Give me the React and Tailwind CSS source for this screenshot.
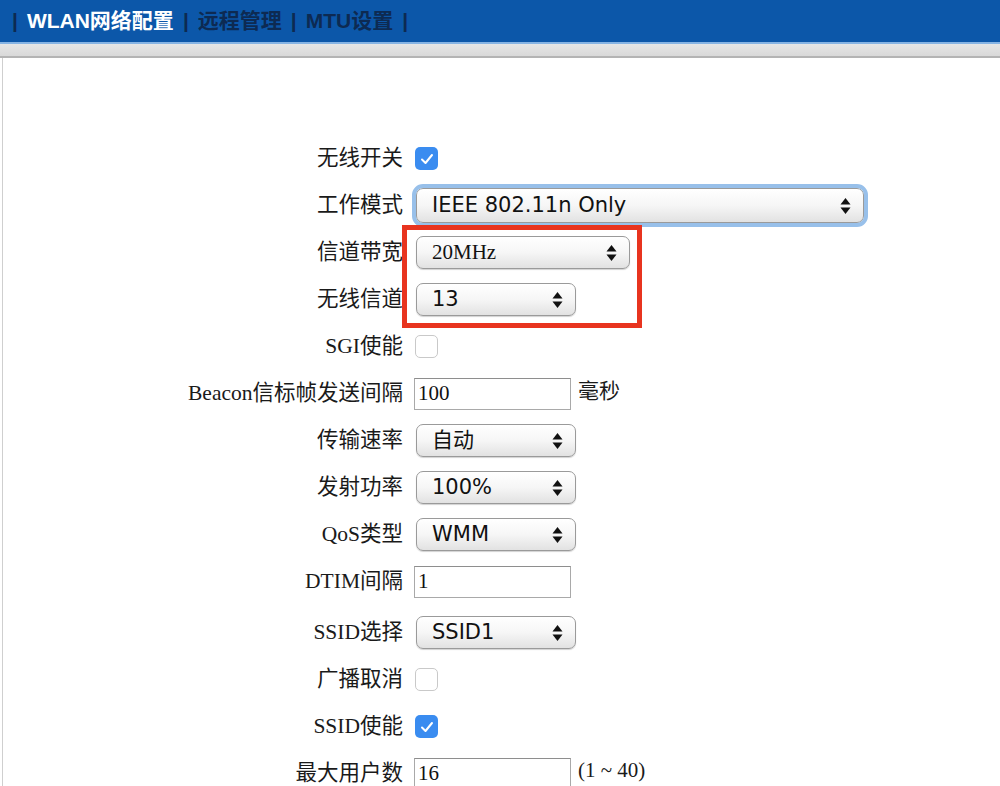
import React from 'react'

const serif = "font-['Liberation_Serif','Noto_Sans_CJK_SC',serif]"
const sans = "font-['DejaVu_Sans','Noto_Sans_CJK_SC',sans-serif]"

function Arrows() {
  return (
    <svg width="11" height="18" viewBox="0 0 11 18" aria-hidden>
      <path d="M5.5 1 L10.5 7.5 L0.5 7.5 Z" fill="#111" />
      <path d="M5.5 17 L10.5 10.5 L0.5 10.5 Z" fill="#111" />
    </svg>
  )
}

function Select({ value, size = 'w-[160px] h-[33px]', focus, serifText }) {
  return (
    <div
      className={
        'flex items-center justify-between rounded-[7px] border border-[#9a9a9a] bg-linear-to-b from-white via-[#f6f6f6] to-[#e2e2e2] pl-[15px] pr-[12px] shadow-[inset_0_1px_0_#fff,0_1px_1px_rgba(0,0,0,0.18)] ' +
        size +
        (focus ? ' outline-4 outline-[#98c0ea]' : '')
      }
    >
      <span className={(serifText ? serif : sans) + ' text-[21px] leading-none text-[#111]'}>{value}</span>
      <Arrows />
    </div>
  )
}

function Check({ on }) {
  if (on) {
    return (
      <div className="-ml-[1px] flex h-[23px] w-[23px] items-center justify-center rounded-[5px] bg-[#3a8cf0]">
        <svg width="14" height="12" viewBox="0 0 14 12" aria-hidden>
          <path d="M2 6.5 L5.5 10 L12 2" fill="none" stroke="#fff" strokeWidth="2" strokeLinecap="round" strokeLinejoin="round" />
        </svg>
      </div>
    )
  }
  return <div className="-ml-[1px] h-[23px] w-[23px] rounded-[5px] border border-[#c9c9c9] bg-white" />
}

function Input({ value }) {
  return (
    <div className="-ml-[2px] flex h-[32px] w-[157px] items-center border border-[#a9a9a9] border-t-[#8e8e8e] bg-white pl-[3px]">
      <span className={serif + ' text-[21px] leading-none text-[#111]'}>{value}</span>
    </div>
  )
}

function Row({ label, children, extra, className = '' }) {
  return (
    <div className={'flex h-[47px] items-center ' + className}>
      <div className={serif + ' w-[400px] text-right text-[21.5px] leading-none text-[#1a1a1a]'}>{label}</div>
      <div className="ml-[13px] flex items-center">
        {children}
        {extra}
      </div>
    </div>
  )
}

function Sep() {
  return <span className="mx-[9px]">|</span>
}

export default function App() {
  return (
    <div className="h-[786px] w-[1000px] overflow-hidden bg-white">
      <header className="flex h-[42px] items-center bg-[#0c57a9] pl-[3px] pb-[2px]">
        <div className={"font-['Liberation_Sans','Noto_Sans_CJK_SC',sans-serif] text-[21px] font-bold leading-none text-[#0d2a52] whitespace-nowrap"}>
          <Sep />
          <span className="text-white">WLAN网络配置</span>
          <Sep />
          远程管理
          <Sep />
          MTU设置
          <Sep />
        </div>
      </header>
      <div className="h-[2px] bg-[#86b4e4]" />
      <div className="h-[14px] border-b-2 border-[#b4b4b4] bg-linear-to-b from-[#e6e6e6] to-[#d9d9d9]" />

      <main className="relative ml-[2px] border-l border-[#cfcfcf] pt-[77px]">
        <Row label="无线开关">
          <Check on />
        </Row>
        <Row label="工作模式">
          <Select value="IEEE 802.11n Only" size="w-[448px] h-[35px]" focus />
        </Row>
        <Row label="信道带宽">
          <Select value="20MHz" size="w-[214px] h-[33px]" serifText />
        </Row>
        <Row label="无线信道">
          <Select value="13" />
        </Row>
        <Row label="SGI使能">
          <Check />
        </Row>
        <Row
          label="Beacon信标帧发送间隔"
          extra={<span className={sans + ' ml-[7px] -mt-[4px] text-[21px] leading-none text-[#1a1a1a]'}>毫秒</span>}
        >
          <Input value="100" />
        </Row>
        <Row label="传输速率">
          <Select value="自动" />
        </Row>
        <Row label="发射功率">
          <Select value="100%" />
        </Row>
        <Row label="QoS类型">
          <Select value="WMM" />
        </Row>
        <Row label="DTIM间隔">
          <Input value="1" />
        </Row>
        <Row label="SSID选择" className="mt-[4px]">
          <Select value="SSID1" />
        </Row>
        <Row label="广播取消">
          <Check />
        </Row>
        <Row label="SSID使能">
          <Check on />
        </Row>
        <Row
          label="最大用户数"
          extra={<span className={serif + ' ml-[7px] -mt-[6px] text-[21px] leading-none text-[#1a1a1a]'}>(1 ~ 40)</span>}
        >
          <Input value="16" />
        </Row>

        <div className="pointer-events-none absolute left-[399px] top-[167px] h-[103px] w-[240px] border-[5px] border-[#e8341f]" />
      </main>
    </div>
  )
}
